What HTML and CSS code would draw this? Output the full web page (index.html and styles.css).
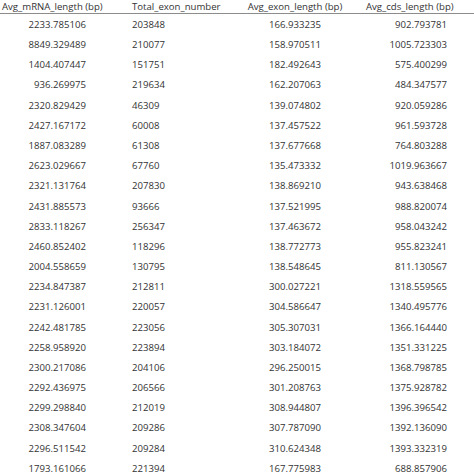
FILE: index.html
```html
<!DOCTYPE html>
<html>
<head>
<meta charset="utf-8">
<link rel="stylesheet" href="styles.css">
</head>
<body>
<div class="table">
  <div class="row head">
    <div class="c1">Avg_mRNA_length (bp)</div>
    <div class="c2">Total_exon_number</div>
    <div class="c3">Avg_exon_length (bp)</div>
    <div class="c4">Avg_cds_length (bp)</div>
  </div>
  <div class="row"><div class="c1">2233.785106</div><div class="c2">203848</div><div class="c3">166.933235</div><div class="c4">902.793781</div></div>
  <div class="row"><div class="c1">8849.329489</div><div class="c2">210077</div><div class="c3">158.970511</div><div class="c4">1005.723303</div></div>
  <div class="row"><div class="c1">1404.407447</div><div class="c2">151751</div><div class="c3">182.492643</div><div class="c4">575.400299</div></div>
  <div class="row"><div class="c1">936.269975</div><div class="c2">219634</div><div class="c3">162.207063</div><div class="c4">484.347577</div></div>
  <div class="row"><div class="c1">2320.829429</div><div class="c2">46309</div><div class="c3">139.074802</div><div class="c4">920.059286</div></div>
  <div class="row"><div class="c1">2427.167172</div><div class="c2">60008</div><div class="c3">137.457522</div><div class="c4">961.593728</div></div>
  <div class="row"><div class="c1">1887.083289</div><div class="c2">61308</div><div class="c3">137.677668</div><div class="c4">764.803288</div></div>
  <div class="row"><div class="c1">2623.029667</div><div class="c2">67760</div><div class="c3">135.473332</div><div class="c4">1019.963667</div></div>
  <div class="row"><div class="c1">2321.131764</div><div class="c2">207830</div><div class="c3">138.869210</div><div class="c4">943.638468</div></div>
  <div class="row"><div class="c1">2431.885573</div><div class="c2">93666</div><div class="c3">137.521995</div><div class="c4">988.820074</div></div>
  <div class="row"><div class="c1">2833.118267</div><div class="c2">256347</div><div class="c3">137.463672</div><div class="c4">958.043242</div></div>
  <div class="row"><div class="c1">2460.852402</div><div class="c2">118296</div><div class="c3">138.772773</div><div class="c4">955.823241</div></div>
  <div class="row"><div class="c1">2004.558659</div><div class="c2">130795</div><div class="c3">138.548645</div><div class="c4">811.130567</div></div>
  <div class="row"><div class="c1">2234.847387</div><div class="c2">212811</div><div class="c3">300.027221</div><div class="c4">1318.559565</div></div>
  <div class="row"><div class="c1">2231.126001</div><div class="c2">220057</div><div class="c3">304.586647</div><div class="c4">1340.495776</div></div>
  <div class="row"><div class="c1">2242.481785</div><div class="c2">223056</div><div class="c3">305.307031</div><div class="c4">1366.164440</div></div>
  <div class="row"><div class="c1">2258.958920</div><div class="c2">223894</div><div class="c3">303.184072</div><div class="c4">1351.331225</div></div>
  <div class="row"><div class="c1">2300.217086</div><div class="c2">204106</div><div class="c3">296.250015</div><div class="c4">1368.798785</div></div>
  <div class="row"><div class="c1">2292.436975</div><div class="c2">206566</div><div class="c3">301.208763</div><div class="c4">1375.928782</div></div>
  <div class="row"><div class="c1">2299.298840</div><div class="c2">212019</div><div class="c3">308.944807</div><div class="c4">1396.396542</div></div>
  <div class="row"><div class="c1">2308.347604</div><div class="c2">209286</div><div class="c3">307.787090</div><div class="c4">1392.136090</div></div>
  <div class="row"><div class="c1">2296.511542</div><div class="c2">209284</div><div class="c3">310.624348</div><div class="c4">1393.332319</div></div>
  <div class="row"><div class="c1">1793.161066</div><div class="c2">221394</div><div class="c3">167.775983</div><div class="c4">688.857906</div></div>
</div>
</body>
</html>
```

FILE: styles.css
```css
html, body {
  margin: 0;
  padding: 0;
  background: #ffffff;
}
body {
  font-family: "Open Sans", "Noto Sans", sans-serif;
  font-size: 9.6px;
  color: #333333;
  overflow: hidden;
}
.table {
  width: 474px;
}
.row {
  display: grid;
  grid-template-columns: 124px 112px 118px 120px;
  height: 20.18px;
  align-items: center;
  white-space: nowrap;
}
.row.head {
  height: 13.4px;
  align-items: start;
  line-height: 13px;
  border-bottom: 1.3px solid #8c8c8c;
}
.c1 {
  text-align: right;
  padding-right: 38px;
}
.c2 {
  padding-left: 8px;
}
.c3 {
  text-align: center;
}
.c4 {
  text-align: right;
  padding-right: 27px;
}
.head .c1 {
  text-align: left;
  padding-left: 2px;
  padding-right: 0;
}
.head .c4 {
  text-align: left;
  padding-left: 12px;
  padding-right: 0;
}
```
